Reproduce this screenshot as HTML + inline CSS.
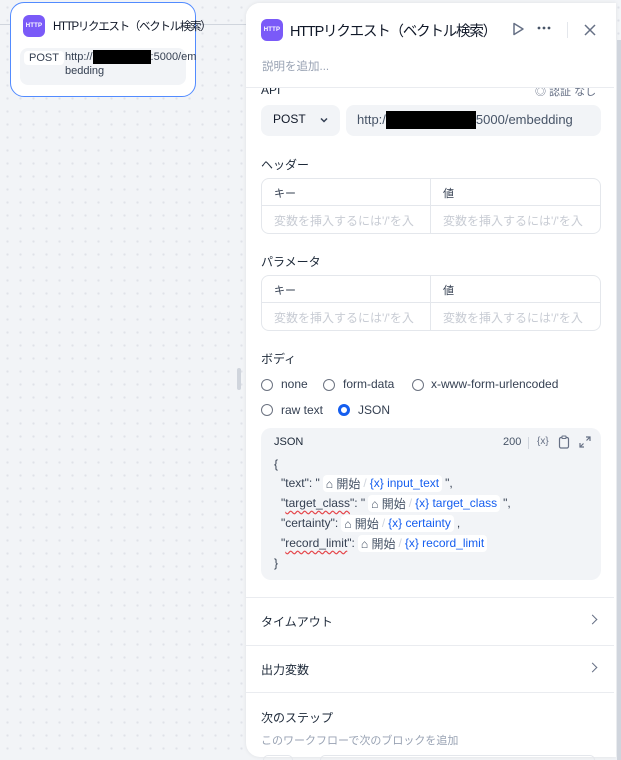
<!DOCTYPE html>
<html><head><meta charset="utf-8">
<style>
*{box-sizing:border-box;margin:0;padding:0}
body{width:621px;height:760px;overflow:hidden;position:relative;font-family:"Liberation Sans","Noto Sans CJK JP",sans-serif;color:#101828;background-color:#f2f4f7;background-image:radial-gradient(circle,#dfe2e8 1px,transparent 1.3px);background-size:13px 13px;background-position:1px 1px}
.a{position:absolute}
.icon{background:#7a5af8;border-radius:6px;color:#fff;font-size:6px;font-weight:bold;display:flex;align-items:center;justify-content:center;letter-spacing:.2px}
.lbl{font-size:12px;color:#1d2939}
.tbl{border:1px solid #e4e7ec;border-radius:8px;width:340px;height:56px;background:#fff}
.tbl div{position:absolute;font-size:12px}
.ph{color:#c8ccd4}
.radio{width:12px;height:12px;border:1px solid #6b7280;border-radius:50%;display:inline-block;position:absolute}
.rt{font-size:12px;color:#354052;position:absolute}
.code{font-size:12px;color:#354052;position:absolute;white-space:nowrap;display:flex;align-items:center;height:18px}
.tag{background:#fff;border-radius:4px;padding:0 3px;height:17px;display:inline-flex;align-items:center;margin:0 3px;color:#475467;font-size:12px}
.tag b{font-weight:normal;color:#155eef}
.tag i{font-style:normal;color:#d0d5dd;margin:0 3px}
.sq{text-decoration:underline wavy #e5484d;text-underline-offset:3px}
.hr{position:absolute;left:246px;width:368px;height:1px;background:#eaecf0}
.chev{position:absolute;left:589px;width:7px;height:7px;border-right:1.5px solid #667085;border-top:1.5px solid #667085;transform:rotate(45deg)}
</style></head><body>
<div class="a" style="left:0;top:24px;width:10px;height:1px;background:#d0d5dd"></div>
<div class="a" style="left:196px;top:24px;width:50px;height:1px;background:#d0d5dd"></div>
<div class="a" style="left:237px;top:368px;width:4px;height:22px;background:#d0d5dd;border-radius:2px"></div>
<!-- node -->
<div class="a" style="left:10px;top:2px;width:186px;height:95px;background:#fff;border:1.5px solid #528bff;border-radius:14px"></div>
<div class="a icon" style="left:23px;top:15px;width:22px;height:22px">HTTP</div>
<div class="a" style="left:53px;top:18px;font-size:11.5px;letter-spacing:-1.3px;color:#101828;white-space:nowrap">HTTPリクエスト（ベクトル検索）</div>
<div class="a" style="left:20px;top:48px;width:166px;height:37px;background:#f2f4f7;border-radius:8px"></div>
<div class="a" style="left:24px;top:51px;background:#fff;border-radius:4px;padding:1px 5px;font-size:11px;color:#354052">POST</div>
<div class="a" style="left:65px;top:50px;font-size:11px;line-height:14px;color:#354052;width:120px;white-space:nowrap">http://<span style="display:inline-block;width:58px;height:14px;background:#000;vertical-align:top"></span>:5000/em<br>bedding</div>
<!-- panel -->
<div class="a" style="left:246px;top:3px;width:370px;height:754px;background:#fff;border-radius:14px 0 0 14px;box-shadow:0 0 4px rgba(0,0,0,.08)"></div>
<div class="a" style="left:617px;top:40px;width:4px;height:720px;background:#d0d5dd"></div>
<div class="a lbl" style="left:261px;top:83px">API</div>
<div class="a" style="left:535px;top:83px;font-size:11px;color:#667085">◎ 認証 なし</div>
<!-- header -->
<div class="a" style="left:246px;top:3px;width:368px;height:85px;background:#fff;border-radius:14px 0 0 0;border-bottom:1px solid #eaecf0"></div>
<div class="a icon" style="left:261px;top:19px;width:22px;height:22px">HTTP</div>
<div class="a" style="left:290px;top:20px;font-size:14.5px;letter-spacing:-1.2px;color:#101828;white-space:nowrap">HTTPリクエスト（ベクトル検索）</div>
<svg class="a" style="left:510px;top:21px" width="16" height="16" viewBox="0 0 16 16"><path d="M4 2.5 L13 8 L4 13.5 Z" fill="none" stroke="#667085" stroke-width="1.5" stroke-linejoin="round"/></svg>
<svg class="a" style="left:537px;top:26px" width="14" height="4" viewBox="0 0 14 4"><circle cx="2" cy="2" r="1.4" fill="#475467"/><circle cx="7" cy="2" r="1.4" fill="#475467"/><circle cx="12" cy="2" r="1.4" fill="#475467"/></svg>
<div class="a" style="left:567px;top:22px;width:1px;height:16px;background:#e4e7ec"></div>
<svg class="a" style="left:583px;top:23px" width="14" height="14" viewBox="0 0 14 14"><path d="M2 2L12 12M12 2L2 12" stroke="#667085" stroke-width="1.5"/></svg>
<div class="a" style="left:262px;top:58px;font-size:11.5px;color:#98a2b3">説明を追加...</div>
<!-- POST / URL -->
<div class="a" style="left:261px;top:105px;width:79px;height:31px;background:#f2f4f7;border-radius:8px"></div>
<div class="a" style="left:273px;top:112px;font-size:12px;color:#101828">POST</div>
<svg class="a" style="left:319px;top:115px" width="10" height="10" viewBox="0 0 10 10"><path d="M2 3.5L5 6.5L8 3.5" fill="none" stroke="#344054" stroke-width="1.5"/></svg>
<div class="a" style="left:346px;top:105px;width:255px;height:31px;background:#f2f4f7;border-radius:8px"></div>
<div class="a" style="left:357px;top:112px;font-size:13px;color:#475467;display:flex">http:/<span style="display:inline-block;width:90px;height:18px;background:#000;margin-top:-1px"></span>5000/embedding</div>
<!-- headers -->
<div class="a lbl" style="left:261px;top:156px">ヘッダー</div>
<div class="a tbl" style="left:261px;top:178px">
 <div style="left:0;top:26px;width:338px;height:1px;background:#e4e7ec"></div>
 <div style="left:168px;top:0;width:1px;height:54px;background:#e4e7ec"></div>
 <div style="left:12px;top:6px;font-size:11px;color:#354052">キー</div>
 <div style="left:181px;top:6px;font-size:11px;color:#354052">値</div>
 <div class="ph" style="left:12px;top:33px">変数を挿入するには'/'を入</div>
 <div class="ph" style="left:181px;top:33px">変数を挿入するには'/'を入</div>
</div>
<div class="a lbl" style="left:261px;top:253px">パラメータ</div>
<div class="a tbl" style="left:261px;top:275px">
 <div style="left:0;top:26px;width:338px;height:1px;background:#e4e7ec"></div>
 <div style="left:168px;top:0;width:1px;height:54px;background:#e4e7ec"></div>
 <div style="left:12px;top:6px;font-size:11px;color:#354052">キー</div>
 <div style="left:181px;top:6px;font-size:11px;color:#354052">値</div>
 <div class="ph" style="left:12px;top:33px">変数を挿入するには'/'を入</div>
 <div class="ph" style="left:181px;top:33px">変数を挿入するには'/'を入</div>
</div>
<!-- body -->
<div class="a lbl" style="left:261px;top:350px">ボディ</div>
<span class="radio" style="left:261px;top:379px"></span><span class="rt" style="left:281px;top:377px">none</span>
<span class="radio" style="left:323px;top:379px"></span><span class="rt" style="left:343px;top:377px">form-data</span>
<span class="radio" style="left:412px;top:379px"></span><span class="rt" style="left:431px;top:377px">x-www-form-urlencoded</span>
<span class="radio" style="left:261px;top:404px"></span><span class="rt" style="left:281px;top:403px">raw text</span>
<span class="radio" style="left:338px;top:404px;border:3.5px solid #155eef"></span><span class="rt" style="left:358px;top:403px">JSON</span>
<!-- JSON box -->
<div class="a" style="left:261px;top:428px;width:340px;height:152px;background:#f2f4f7;border-radius:10px"></div>
<div class="a" style="left:274px;top:436px;font-size:11px;color:#1d2939">JSON</div>
<div class="a" style="left:503px;top:436px;font-size:11px;color:#475467">200</div>
<div class="a" style="left:528px;top:437px;width:1px;height:12px;background:#d0d5dd"></div>
<div class="a" style="left:537px;top:436px;font-size:10px;color:#667085">{x}</div>
<svg class="a" style="left:558px;top:435px" width="12" height="14" viewBox="0 0 12 14"><rect x="1.5" y="2.5" width="9" height="10.5" rx="1.5" fill="none" stroke="#667085" stroke-width="1.2"/><rect x="4" y="1" width="4" height="2.5" rx=".5" fill="#f2f4f7" stroke="#667085" stroke-width="1.1"/></svg>
<svg class="a" style="left:579px;top:436px" width="12" height="12" viewBox="0 0 12 12"><path d="M7 1H11V5M11 1L7.5 4.5M5 11H1V7M1 11L4.5 7.5" fill="none" stroke="#667085" stroke-width="1.2"/></svg>
<div class="code" style="left:274px;top:455px">{</div>
<div class="code" style="left:281px;top:474px">"text": "<span class="tag">⌂ 開始<i>/</i><b>{x} input_text</b></span>",</div>
<div class="code" style="left:281px;top:494px">"<span class="sq">target_class</span>": "<span class="tag">⌂ 開始<i>/</i><b>{x} target_class</b></span>",</div>
<div class="code" style="left:281px;top:514px">"certainty": <span class="tag">⌂ 開始<i>/</i><b>{x} certainty</b></span>,</div>
<div class="code" style="left:281px;top:534px">"<span class="sq">record_limit</span>": <span class="tag">⌂ 開始<i>/</i><b>{x} record_limit</b></span></div>
<div class="code" style="left:274px;top:554px">}</div>
<!-- sections -->
<div class="hr" style="top:597px"></div>
<div class="a lbl" style="left:261px;top:613px">タイムアウト</div>
<div class="chev" style="top:616px"></div>
<div class="hr" style="top:645px"></div>
<div class="a lbl" style="left:261px;top:661px">出力変数</div>
<div class="chev" style="top:664px"></div>
<div class="hr" style="top:692px"></div>
<div class="a lbl" style="left:261px;top:709px">次のステップ</div>
<div class="a" style="left:261px;top:732px;font-size:11px;color:#98a2b3">このワークフローで次のブロックを追加</div>
<div class="a" style="left:263px;top:755px;width:30px;height:5px;border:1px solid #e4e7ec;border-bottom:none;border-radius:6px 6px 0 0"></div>
<div class="a" style="left:320px;top:755px;width:275px;height:5px;border:1px solid #e4e7ec;border-bottom:none;border-radius:6px 6px 0 0"></div>
</body></html>
